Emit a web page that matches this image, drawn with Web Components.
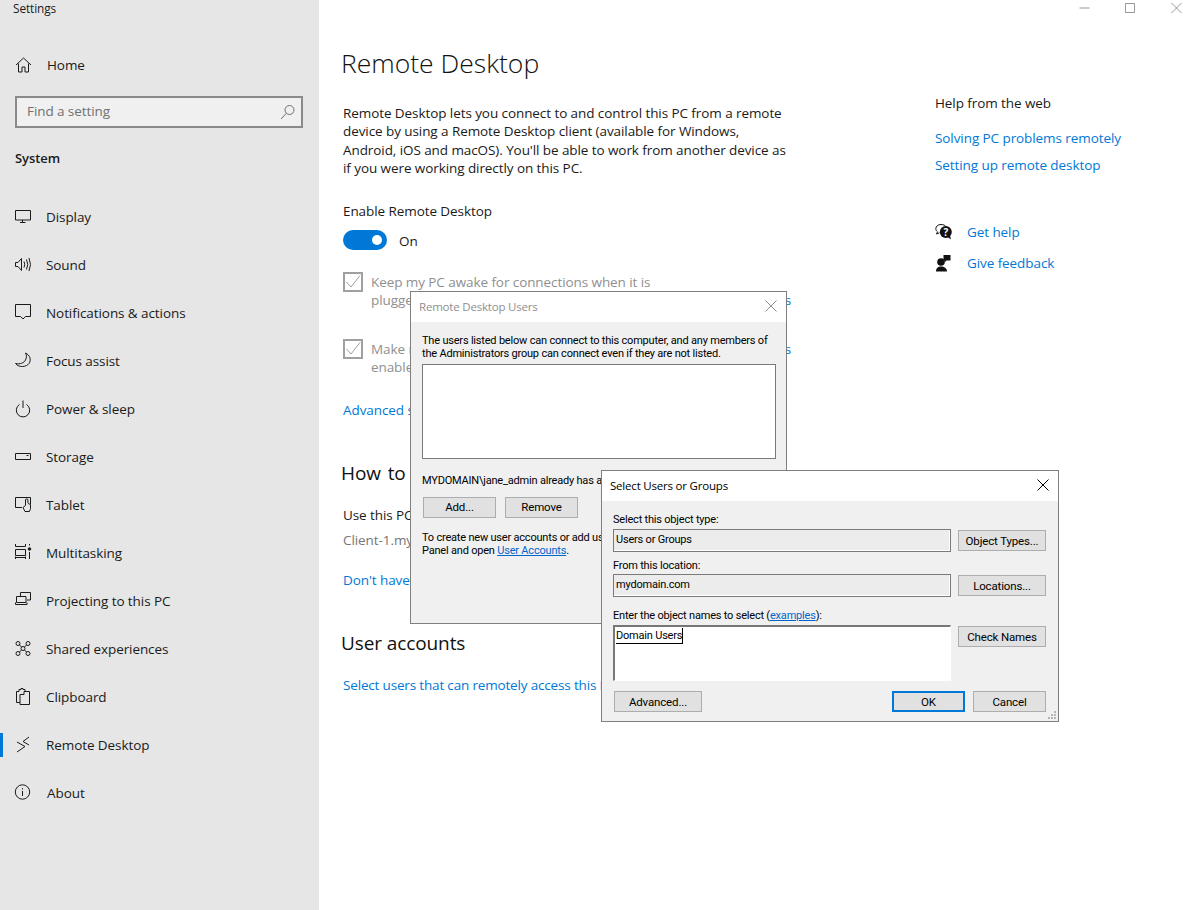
<!DOCTYPE html>
<html><head><meta charset="utf-8"><title>Settings</title>
<style>
html,body{margin:0;height:100%;overflow:hidden;background:#fff}
body{font-family:"Open Sans","Noto Sans","Liberation Sans",sans-serif;font-size:13.5px;color:#1a1a1a;letter-spacing:-.08px}
</style></head><body>
<template id="icons">
<svg data-n="home" viewBox="0 0 20 20"><path d="M2 10 9.500 3 17 10M4.500 8.500V17H8V12H11V17H14.500V8.500"/></svg>
<svg data-n="display" viewBox="0 0 20 20"><path d="M1.500 3.500H16.500V13H1.500ZM8.500 13V15.500M6 15.500H11.500"/></svg>
<svg data-n="sound" viewBox="0 0 20 20"><path d="M1.500 7.500H4L7.500 3.500V15.500L4 11.500H1.500ZM10 6.500Q11.500 9.500 10 12.500M12.500 4.500Q15 9.500 12.500 14.500M15 3Q18 9.500 15 16"/></svg>
<svg data-n="notif" viewBox="0 0 20 20"><path d="M1.500 1.500H16.500V13.500H11.500L9 16 6.500 13.500H1.500Z"/></svg>
<svg data-n="focus" viewBox="0 0 20 20"><path d="M11.500 2C16 4 17.500 9 15 12.500 12.500 16 5 17 1.500 12.500 6 13.500 10 12 11.500 9 13 6 12.500 4 11.500 2Z"/></svg>
<svg data-n="power" viewBox="0 0 20 20"><path d="M5.500 5.500A6.700 6.700 0 1 0 12.500 5.500M9 1.500V9"/></svg>
<svg data-n="storage" viewBox="0 0 20 20"><path d="M1.500 6.500H16.500V12.500H1.500ZM12.500 8.500H14.500"/></svg>
<svg data-n="tablet" viewBox="0 0 20 20"><path d="M8 12.500H1.500V2.500H16.500V9M11.500 10.500V5A1.200 1.200 0 0 1 13.900 5V8M9 12.500 11.500 10.500M9 12.500 11 16.500H15.500L16.500 13.500V9.500L14 8.500"/></svg>
<svg data-n="multi" viewBox="0 0 20 20"><path d="M1.500 1V3.500H11.500V1M1.500 6.500H11.500V12.500H1.500ZM1.500 16V13.500M11.500 16V13.500M1.500 14.500H11.500M15.500 1V2.500M15.500 9V16"/><circle cx="15.500" cy="6" r="1.300" fill="currentColor"/></svg>
<svg data-n="project" viewBox="0 0 20 20"><path d="M6.500 5V1.500H16.500V9H13M2.500 5.500H12V11.500H2.500ZM1.500 13.500H13M1.500 11.500V13.500M13 11.500V13.500"/></svg>
<svg data-n="shared" viewBox="0 0 20 20"><circle cx="9" cy="9.500" r="2"/><circle cx="4" cy="4.500" r="2"/><circle cx="14" cy="4.500" r="2"/><circle cx="4" cy="14.500" r="2"/><circle cx="14" cy="14.500" r="2"/><path d="M5.500 6 7.500 8M12.500 6 10.500 8M5.500 13 7.500 11M12.500 13 10.500 11"/></svg>
<svg data-n="clip" viewBox="0 0 20 20"><path d="M5 4.500H2.500V15.500H6M10 4.500H15.500V17.500H6V7.500H10ZM5 4.500V2.500H7V1.500H9V2.500H11V4.500"/></svg>
<svg data-n="remote" viewBox="0 0 20 20"><path d="M3 7 11 11.500 3 17M15 2 9 6.500 15 10"/></svg>
<svg data-n="about" viewBox="0 0 20 20"><circle cx="8.500" cy="9" r="7.200"/><path d="M8.500 8V13M8.500 5.200V6.500"/></svg>
</template>
<template id="t-nav"><style>
:host{display:flex;align-items:center;height:48px;position:relative}
svg{width:20px;height:20px;margin-left:14px;margin-right:var(--mr,12px);flex:none;fill:none;stroke:#1a1a1a;stroke-width:1}
.bar{display:none;position:absolute;left:0;top:12px;width:3px;height:24px;background:#0078d7}
:host([active]) .bar{display:block}
</style><i class="bar"></i><span id="ic"></span><slot></slot></template>

<template id="t-side"><style>
:host{display:flex;flex-direction:column;flex:none;width:319px;height:100%;background:#e6e6e6;font-size:13.5px;color:#1a1a1a}
.app{height:16px;line-height:16px;padding-left:13px;font-size:11.800px}
.home{margin-top:25px;--mr:13px}
.search{display:flex;align-items:center;justify-content:space-between;box-sizing:border-box;margin:7px 0 0 15px;width:288px;height:32px;border:2px solid #8a8a8a;background:#f0f0f0;color:#707070;padding:0 5px 2px 10px}
.search svg{width:16px;height:16px;fill:none;stroke:#707070;margin-top:2px}
.sys{margin:20px 0 0 15px;height:20px;line-height:20px;font-weight:600;font-size:13px}
.items{margin-top:25px}
</style>
<div class="app">Settings</div>
<nav-item class="home" icon="home">Home</nav-item>
<div class="search"><span>Find a setting</span><svg viewBox="0 0 16 16"><circle cx="9.500" cy="6" r="4.500"/><path d="M6.300 9.300 1 15"/></svg></div>
<div class="sys">System</div>
<div class="items"><slot></slot></div></template>

<template id="t-toggle"><style>
:host{display:flex;align-items:center;height:20px;gap:12px}
.t{width:44px;height:20px;margin-bottom:2px;border-radius:10px;background:#0078d7;position:relative}
.t::after{content:"";position:absolute;right:5px;top:5px;width:10px;height:10px;border-radius:50%;background:#fff}
</style><div class="t"></div><slot></slot></template>

<template id="t-check"><style>
:host{display:flex;width:448px;color:#8f8f8f}
.b{flex:none;box-sizing:border-box;width:20px;height:20px;border:2px solid #a0a0a0;margin-right:8px}
.b svg{display:block;width:16px;height:16px;fill:none;stroke:#a0a0a0;stroke-width:1}
.t{width:340px;line-height:18.330px;padding-top:.6px}
.l{margin-left:auto;line-height:18.330px;padding-top:.6px;color:#0078d7;white-space:nowrap}
:host([low]) .l{align-self:flex-end}
</style><div class="b"><svg viewBox="0 0 16 16"><path d="M1.500 8 6 13 15 1.500"/></svg></div><div class="t"><slot></slot></div><div class="l">Show settings</div></template>

<template id="t-link"><style>:host{display:block;color:#0078d7;white-space:nowrap;height:20px;line-height:20px}</style><slot></slot></template>

<template id="t-main"><style>
:host{display:flex;flex-direction:column;flex:1;min-width:0;height:100%;background:#fff}
.ctl{height:16px;display:flex;justify-content:flex-end;flex:none}
.ctl svg{width:46px;height:16px;fill:none;stroke:#999;stroke-width:1}
.row{display:flex}
.col{width:594px;padding-left:22px;flex:none;box-sizing:content-box}
h1{font-weight:300;font-size:26.500px;line-height:40px;margin:27px 0 0;color:#111;white-space:nowrap;letter-spacing:0}
</style>
<div class="ctl">
<svg viewBox="0 0 46 16"><path d="M23.500 8H33.500"/></svg>
<svg viewBox="0 0 46 16"><path d="M23.500 3.500H32.500V12.500H23.500Z"/></svg>
<svg viewBox="0 0 46 16" style="margin-right:1px"><path d="M23.500 3 33.500 13M33.500 3 23.500 13"/></svg>
</div>
<div class="row"><div class="col"><h1>Remote Desktop</h1><slot></slot></div><slot name="help"></slot></div></template>

<template id="t-help"><style>
:host{display:block;padding-top:77px;white-space:nowrap}
.h{height:20px;line-height:20px}
.a{display:block;height:20px;line-height:20px;color:#0078d7;margin-top:7px}
.a:first-of-type{margin-top:15px}
.f{display:flex;align-items:center;gap:14px;height:20px;color:#0078d7;margin-top:11px}
.f.first{margin-top:47px}
svg{width:18px;height:18px;flex:none}
</style><div class="h">Help from the web</div>
<a class="a">Solving PC problems remotely</a><a class="a">Setting up remote desktop</a>
<div class="f first"><svg viewBox="0 0 18 18"><path d="M6 1.500C3 1.500 .8 3.300 .8 5.700.8 7 1.500 8 2.500 8.800L1.500 11 4.500 9.800" fill="none" stroke="#111"/><path d="M6 1.500C8.500 1.500 10.500 2.500 11.300 4" fill="none" stroke="#111"/><circle cx="10.800" cy="9" r="6" fill="#111"/><path d="M12.500 14 16 16.500 15 12.500" fill="#111"/><text x="10.800" y="12.500" font-size="10" font-weight="700" font-family="Open Sans" text-anchor="middle" fill="#fff">?</text></svg><span>Get help</span></div>
<div class="f"><svg viewBox="0 0 18 18"><circle cx="6" cy="8" r="3.800" fill="#111"/><path d="M1 17.500C1 14 3 12.500 6 12.500S12 14 12 17.500Z" fill="#111"/><path d="M8.500 1H15.500V6.500H11.500L9.500 8.500V6.500H8.500Z" fill="#111"/></svg><span>Give feedback</span></div></template>

<template id="t-dialog"><style>
:host{display:flex;flex-direction:column;position:absolute;box-sizing:border-box;border:1px solid #7f7f7f;background:#f0f0f0;font-size:11px;color:#000;font-family:Roboto,"Open Sans",sans-serif;letter-spacing:-.2px}
.tb{flex:none;height:30px;background:#fff;display:flex;align-items:center;justify-content:space-between;padding:0 9px 2px 8px;box-sizing:border-box;font-family:"Open Sans",sans-serif;font-size:11.500px;letter-spacing:-.2px}
svg{width:12px;height:12px;fill:none;stroke:currentColor;stroke-width:1}
:host([inactive]) .tb{color:#8f8f8f}
.body{flex:1;min-height:0;position:relative}
</style><div class="tb"><span id="ti"></span><svg viewBox="0 0 12 12"><path d="M.5 .5 11.500 11.500M11.500 .5 .5 11.500"/></svg></div><div class="body"><slot></slot></div></template>

<template id="t-btn"><style>
:host{display:flex;align-items:center;justify-content:center;box-sizing:border-box;height:21px;background:#e1e1e1;border:1px solid #adadad;color:#000;font-size:11.500px;letter-spacing:-.15px;white-space:nowrap}
:host([primary]){border:2px solid #0078d7}
</style><slot></slot></template>

<template id="t-rdu"><style>
:host{display:block;padding:12px 10px 0 11px;line-height:13px;white-space:nowrap}
.list{box-sizing:border-box;height:95px;width:354px;margin-top:4px;background:#fff;border:1px solid #7a7a7a}
.has{margin-top:15px}
.btns{display:flex;gap:9px;margin:10px 0 0 1px}
win-btn{width:73px}
.note{margin-top:13px}
a{color:#0066cc;text-decoration:underline}
</style><div>The users listed below can connect to this computer, and any members of<br>the Administrators group can connect even if they are not listed.</div>
<div class="list"></div>
<div class="has">MYDOMAIN\jane_admin already has access.</div>
<div class="btns"><win-btn>Add...</win-btn><win-btn>Remove</win-btn></div>
<div class="note">To create new user accounts or add users to groups, open Control<br>Panel and open <a>User Accounts</a>.</div></template>

<template id="t-sel"><style>
:host{display:grid;grid-template-columns:338px 88px;column-gap:7px;padding:11px 0 0 11px;line-height:14px}
.lab{grid-column:1/3;height:14px;line-height:16px;white-space:nowrap}
.f{box-sizing:border-box;height:23px;margin-top:3px;border:1px solid #7a7a7a;background:#ececec;box-shadow:inset -1px -1px 0 #fff;padding:2px 2px;line-height:16px}
win-btn{margin-top:4px;align-self:start}
.lab2{margin-top:6px}
.lab2+.f{margin-top:2px}
.lab2+.f+win-btn{margin-top:3px}
.lab3{margin-top:11px}
.ta{box-sizing:border-box;height:56px;margin-top:3px;border:1px solid #fff;border-top:2px solid #777;border-left:2px solid #777;background:#fff;padding:1px 1px}
.ta span{border-right:1px solid #000;display:inline-block;line-height:15px;border-bottom:1px solid #000}
a{color:#0066cc;text-decoration:underline}
.foot{grid-column:1/3;display:flex;margin:10px 0 0 1px;gap:8px}
.foot win-btn{margin:0;width:73px}
.foot win-btn.adv{width:88px;margin-right:auto}
.grip{position:absolute;right:1px;bottom:1px;width:10px;height:10px;fill:#b5b5b5}
</style>
<div class="lab">Select this object type:</div>
<div class="f">Users or Groups</div><win-btn>Object Types...</win-btn>
<div class="lab lab2">From this location:</div>
<div class="f">mydomain.com</div><win-btn>Locations...</win-btn>
<div class="lab lab3">Enter the object names to select (<a>examples</a>):</div>
<div class="ta"><span>Domain Users</span></div><win-btn>Check Names</win-btn>
<div class="foot"><win-btn class="adv">Advanced...</win-btn><win-btn primary>OK</win-btn><win-btn>Cancel</win-btn></div>
<svg class="grip" viewBox="0 0 10 10"><rect x="7" y="1" width="2" height="2"/><rect x="4" y="4" width="2" height="2"/><rect x="7" y="4" width="2" height="2"/><rect x="1" y="7" width="2" height="2"/><rect x="4" y="7" width="2" height="2"/><rect x="7" y="7" width="2" height="2"/></svg></template>

<template id="t-content"><style>
:host{display:block;font-size:13.500px;color:#1a1a1a}
.in{padding-left:2px;width:460px}
p{margin:21px 0 0;line-height:18.330px;width:445px}
.lab{margin-top:24px;height:20px;line-height:20px}
toggle-switch{margin-top:10px}
check-row.a{margin-top:21px}
check-row.b{margin-top:29.700px}
h2{font-weight:400;font-size:19px;line-height:28px;margin:0 0 0 -2px;color:#111;white-space:nowrap;letter-spacing:-.1px}
.rows{height:20px;line-height:20px;white-space:nowrap}
.grey{color:#767676}
</style><div class="in">
<p>Remote Desktop lets you connect to and control this PC from a remote device by using a Remote Desktop client (available for Windows, Android, iOS and macOS). You'll be able to work from another device as if you were working directly on this PC.</p>
<div class="lab">Enable Remote Desktop</div>
<toggle-switch>On</toggle-switch>
<check-row class="a" low>Keep my PC awake for connections when it is<br>plugged in</check-row>
<check-row class="b">Make my PC discoverable on private networks to<br>enable automatic connection</check-row>
<link-text style="margin-top:23.340px">Advanced settings</link-text>
<h2 style="margin-top:39px;word-spacing:2px">How to connect to this PC</h2>
<div class="rows" style="margin-top:18px">Use this PC name to connect from your remote device:</div>
<div class="rows grey" style="margin-top:5px">Client-1.mydomain.com</div>
<link-text style="margin-top:20px">Don't have a Remote Desktop client on your remote device?</link-text>
<h2 style="margin-top:39px">User accounts</h2>
<link-text style="margin-top:18px;letter-spacing:-.17px">Select users that can remotely access this PC</link-text>
</div></template>

<settings-app>
<settings-side>
<nav-item icon="display">Display</nav-item>
<nav-item icon="sound">Sound</nav-item>
<nav-item icon="notif">Notifications &amp; actions</nav-item>
<nav-item icon="focus">Focus assist</nav-item>
<nav-item icon="power">Power &amp; sleep</nav-item>
<nav-item icon="storage">Storage</nav-item>
<nav-item icon="tablet">Tablet</nav-item>
<nav-item icon="multi">Multitasking</nav-item>
<nav-item icon="project">Projecting to this PC</nav-item>
<nav-item icon="shared">Shared experiences</nav-item>
<nav-item icon="clip">Clipboard</nav-item>
<nav-item icon="remote" active>Remote Desktop</nav-item>
<nav-item icon="about" style="--mr:13px">About</nav-item>
</settings-side>
<settings-main>
<settings-content></settings-content>
<help-panel slot="help"></help-panel>
</settings-main>
<win-dialog heading="Remote Desktop Users" inactive style="left:410px;top:291px;width:377px;height:333px"><rdu-body></rdu-body></win-dialog>
<win-dialog heading="Select Users or Groups" style="left:601px;top:470px;width:458px;height:252px"><select-body></select-body></win-dialog>
</settings-app>

<script>
const def=(name,tid,extra)=>customElements.define(name,class extends HTMLElement{
  constructor(){super();this.attachShadow({mode:"open"}).appendChild(document.getElementById(tid).content.cloneNode(true));}
  connectedCallback(){extra&&extra(this)}
});
customElements.define("settings-app",class extends HTMLElement{
  constructor(){super();const s=this.attachShadow({mode:"open"});s.innerHTML='<style>:host{display:flex;position:relative;width:1195px;height:910px;overflow:hidden}</style><slot></slot>';}
});
def("nav-item","t-nav",el=>{
  const src=document.getElementById("icons").content.querySelector('[data-n="'+el.getAttribute("icon")+'"]');
  const sp=el.shadowRoot.getElementById("ic");
  if(sp&&src){sp.replaceWith(src.cloneNode(true));}
});
def("settings-side","t-side");
def("settings-main","t-main");
def("settings-content","t-content");
def("help-panel","t-help");
def("toggle-switch","t-toggle");
def("check-row","t-check");
def("link-text","t-link");
def("win-btn","t-btn");
def("rdu-body","t-rdu");
def("select-body","t-sel");
def("win-dialog","t-dialog",el=>{el.shadowRoot.getElementById("ti").textContent=el.getAttribute("heading")});
</script>
</body></html>
